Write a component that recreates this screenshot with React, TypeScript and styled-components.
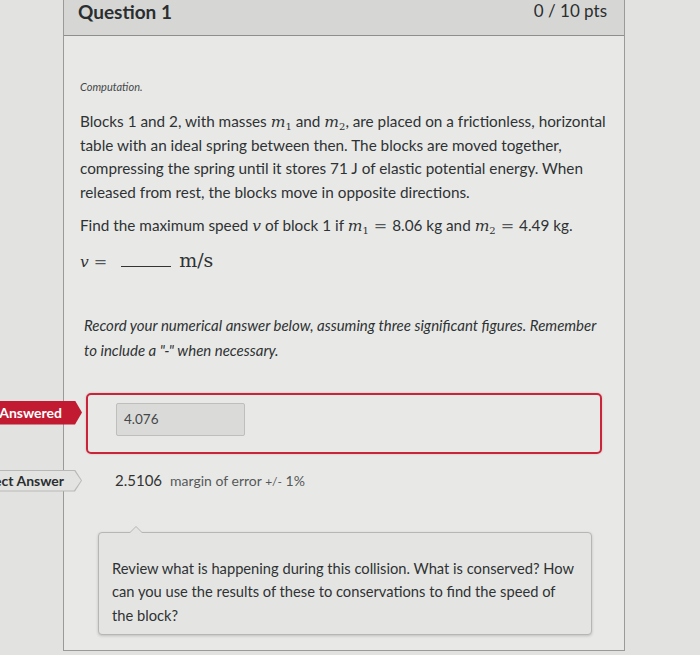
import React from "react";
import styled, { createGlobalStyle } from "styled-components";

const GlobalStyle = createGlobalStyle`
  html, body { margin: 0; padding: 0; background: #e2e3e0; }
  body {
    font-family: Lato, "Noto Sans", sans-serif;
    color: #2f3234;
    overflow: hidden;
  }
`;

const Page = styled.div`
  width: 700px;
  height: 655px;
  box-sizing: border-box;
  padding: 0 75px 0 63px;
  overflow: hidden;
`;

const Card = styled.section`
  border: 1px solid #9a9b99;
  border-top: none;
  background: #e8e9e6;
`;

const Header = styled.header`
  height: 36px;
  box-sizing: border-box;
  display: flex;
  justify-content: space-between;
  align-items: flex-start;
  padding: 0 17px 0 14px;
  background: #d6d7d4;
  border-bottom: 1px solid #8e8f8d;
`;

const Title = styled.h2`
  margin: 0;
  font-size: 19px;
  line-height: 24px;
  font-weight: 700;
  color: #2b2e30;
`;

const Points = styled.div`
  font-size: 17px;
  line-height: 22px;
  font-weight: 400;
  color: #2b2e30;
`;

const Body = styled.div`
  padding: 43px 12px 15px 16px;
`;

const Label = styled.div`
  font-size: 11px;
  line-height: 16px;
  font-style: italic;
  color: #45484a;
`;

const Para = styled.p<{ $top?: number }>`
  margin: ${(p) => p.$top ?? 0}px 0 0 0;
  font-size: 15.3px;
  line-height: 23.5px;
  color: #2f3234;
`;

const MathLine = styled.div`
  margin: 11px 0 0 0;
  height: 24px;
  display: flex;
  align-items: baseline;
`;

const Mi = styled.span`
  font-family: "DejaVu Serif", "Liberation Serif", serif;
  font-style: italic;
  font-size: 15.5px;
  line-height: 1;
`;

const Sub = styled.sub`
  font-family: "DejaVu Serif", serif;
  font-style: normal;
  font-size: 10px;
  vertical-align: -3px;
  line-height: 0;
`;

const Eq = styled.span`
  font-family: "DejaVu Serif", serif;
  margin: 0 5px;
  font-size: 16px;
  line-height: 1;
  color: #55585a;
`;

const Blank = styled.span`
  display: inline-block;
  width: 50px;
  border-bottom: 1px solid #333;
  margin: 0 8px 0 9px;
`;

const Unit = styled.span`
  font-family: "DejaVu Serif", "Liberation Serif", serif;
  font-size: 19px;
  color: #2f3234;
`;

const Instruction = styled.p`
  margin: 40px 0 0 4px;
  font-size: 15px;
  line-height: 25px;
  font-style: italic;
  color: #2f3234;
`;

const AnswerRow = styled.div<{ $top: number }>`
  display: flex;
  align-items: flex-start;
  margin: ${(p) => p.$top}px 10px 0 -80px;
`;

const LabelCol = styled.div<{ $offset: number }>`
  width: 82px;
  flex: none;
  display: flex;
  justify-content: flex-end;
  margin: ${(p) => p.$offset}px 4px 0 0;
`;

const arrow = `polygon(0 0, calc(100% - 7px) 0, 100% 50%, calc(100% - 7px) 100%, 0 100%)`;

const RedBadge = styled.div`
  flex: none;
  height: 24px;
  line-height: 24px;
  padding: 0 20px 0 8px;
  white-space: nowrap;
  background: #c11a31;
  color: #fff;
  font-weight: 700;
  font-size: 14px;
  clip-path: ${arrow};
`;

const GreyBadgeFrame = styled.div`
  flex: none;
  padding: 1px;
  background: #b8b9b7;
  clip-path: ${arrow};
`;

const GreyBadge = styled.div`
  height: 20px;
  line-height: 20px;
  padding: 0 17px 0 8px;
  white-space: nowrap;
  background: #e3e4e1;
  color: #2b2e30;
  font-weight: 700;
  font-size: 14px;
  clip-path: ${arrow};
`;

const AnswerBox = styled.div`
  flex: 1;
  height: 61px;
  box-sizing: border-box;
  border: 2px solid #c8253b;
  border-radius: 5px;
  padding: 8px 0 0 28px;
  box-shadow: 0 0 2px rgba(200, 37, 59, 0.35);
`;

const Field = styled.div`
  width: 129px;
  height: 33px;
  box-sizing: border-box;
  border: 1px solid #bebfbd;
  border-radius: 2px;
  background: #dadbd8;
  padding: 0 0 0 7px;
  font-size: 13.5px;
  line-height: 31px;
  color: #45484a;
`;

const CorrectText = styled.div`
  flex: 1;
  padding: 0 0 0 29px;
  line-height: 22px;
  font-size: 15px;
  color: #333;
  white-space: nowrap;
`;

const Margin = styled.span`
  margin-left: 8px;
  font-size: 14px;
  color: #55585a;
`;

const Small = styled.span`
  font-size: 12px;
`;

const Hint = styled.div`
  position: relative;
  margin: 39px 20px 0 18px;
  border: 1px solid #b6b7b4;
  border-radius: 4px;
  background: #e4e5e2;
  box-shadow: 0 1px 3px rgba(0, 0, 0, 0.18);
  padding: 24px 12px 7px 13px;
  font-size: 14.7px;
  line-height: 23.5px;
  color: #2f3234;

  &::before,
  &::after {
    content: "";
    position: absolute;
    left: 30px;
    width: 0;
    height: 0;
    border-left: 7px solid transparent;
    border-right: 7px solid transparent;
  }
  &::before {
    top: -7px;
    border-bottom: 7px solid #b6b7b4;
  }
  &::after {
    top: -6px;
    border-bottom: 7px solid #e4e5e2;
  }
`;

export default function App() {
  return (
    <>
      <GlobalStyle />
      <Page>
        <Card>
          <Header>
            <Title>Question 1</Title>
            <Points>0 / 10 pts</Points>
          </Header>
          <Body>
            <Label>Computation.</Label>
            <Para $top={15}>
              Blocks 1 and 2, with masses <Mi>m</Mi>
              <Sub>1</Sub> and <Mi>m</Mi>
              <Sub>2</Sub>, are placed on a frictionless, horizontal table with an ideal
              spring between then. The blocks are moved together, compressing the spring
              until it stores 71 J of elastic potential energy. When released from rest,
              the blocks move in opposite directions.
            </Para>
            <Para $top={10}>
              Find the maximum speed <Mi>v</Mi> of block 1 if <Mi>m</Mi>
              <Sub>1</Sub>
              <Eq>=</Eq>8.06 kg and <Mi>m</Mi>
              <Sub>2</Sub>
              <Eq>=</Eq>4.49 kg.
            </Para>
            <MathLine>
              <Mi>v</Mi>
              <Eq>=</Eq>
              <Blank />
              <Unit>m/s</Unit>
            </MathLine>
            <Instruction>
              Record your numerical answer below, assuming three significant figures.
              Remember to include a "-" when necessary.
            </Instruction>
            <AnswerRow $top={30}>
              <LabelCol $offset={8}>
                <RedBadge>Answered</RedBadge>
              </LabelCol>
              <AnswerBox>
                <Field>4.076</Field>
              </AnswerBox>
            </AnswerRow>
            <AnswerRow $top={15}>
              <LabelCol $offset={1}>
                <GreyBadgeFrame>
                  <GreyBadge>Correct Answer</GreyBadge>
                </GreyBadgeFrame>
              </LabelCol>
              <CorrectText>
                2.5106
                <Margin>
                  margin of error <Small>+/-</Small> 1%
                </Margin>
              </CorrectText>
            </AnswerRow>
            <Hint>
              Review what is happening during this collision. What is conserved? How can
              you use the results of these to conservations to find the speed of the
              block?
            </Hint>
          </Body>
        </Card>
      </Page>
    </>
  );
}
